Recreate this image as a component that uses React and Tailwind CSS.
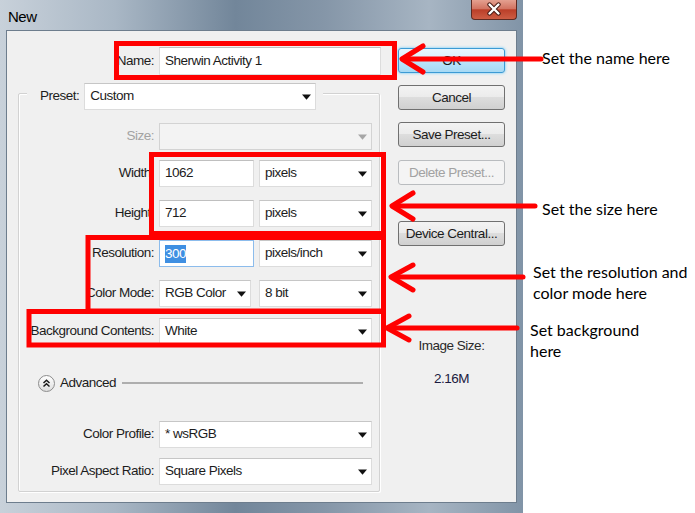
import clsx from "clsx";

const DownArrow = ({ disabled }) => (
  <svg width="9" height="6" viewBox="0 0 9 6" className="shrink-0">
    <path d="M0 0.5H9L4.5 5.8Z" fill={disabled ? "#a6a6a6" : "#111"} />
  </svg>
);

const Select = ({ value, w, disabled, className }) => (
  <div
    className={clsx(
      "flex h-[27px] items-center justify-between border pl-[5px] pr-[4px]",
      w,
      className,
      disabled ? "border-[#d3d3d3] bg-[#f3f3f3]" : "border-[#dcdcdc] border-t-[#c6c6c6] bg-white"
    )}
  >
    <span className="whitespace-nowrap">{value}</span>
    <DownArrow disabled={disabled} />
  </div>
);

const Field = ({ w, children, focus, className }) => (
  <div
    className={clsx(
      "flex h-[27px] items-center border bg-white pl-[5px]",
      w,
      className,
      focus ? "border-[#8cbcec]" : "border-[#dcdcdc] border-t-[#bfbfbf]"
    )}
  >
    {children}
  </div>
);

const Row = ({ label, dim, className, children }) => (
  <div className={clsx("flex items-center", className)}>
    <div className={clsx("w-[140px] pr-[5px] text-right whitespace-nowrap", dim && "text-[#a3a3a3]")}>{label}</div>
    <div className="flex items-center">{children}</div>
  </div>
);

const Btn = ({ children, primary, disabled, className }) => (
  <div
    className={clsx(
      "h-[25px] w-[107px] rounded-[3px] border text-center leading-[23px] whitespace-nowrap",
      className,
      primary &&
        "border-[#3c9ad4] bg-[linear-gradient(#e9f6fd,#d6effc_50%,#bde5fb_50%,#a6d9f4)] shadow-[0_0_3px_#5cc6fb]",
      disabled && "border-[#b9bcbf] bg-[#f4f4f4] text-[#a2a2a2]",
      !primary && !disabled && "border-[#707070] bg-[linear-gradient(#f3f3f3,#ebebeb_50%,#dddddd_50%,#d0d0d0)]"
    )}
  >
    {children}
  </div>
);

const CloseButton = () => (
  <div className="mr-[6px] flex h-[20px] w-[46px] items-start justify-center rounded-b-[4px] border border-t-0 border-[#5e2a22] bg-[linear-gradient(#e4a090,#d27462_45%,#bb3f29_52%,#cd5d44)]">
    <svg width="16" height="14" viewBox="0 0 16 14" className="mt-[2px]">
      <path d="M3.5 2.5L12.5 11.5M12.5 2.5L3.5 11.5" stroke="#4a1c16" strokeWidth="4.4" strokeLinecap="round" />
      <path d="M3.5 2.5L12.5 11.5M12.5 2.5L3.5 11.5" stroke="#fff" strokeWidth="2.4" strokeLinecap="round" />
    </svg>
  </div>
);

const AdvancedToggle = () => (
  <div className="flex h-[17px] w-[17px] items-center justify-center rounded-full border border-[#8c8c8c] bg-[linear-gradient(#ffffff,#dedede)]">
    <svg width="11" height="11" viewBox="0 0 11 11">
      <path d="M2.5 5L5.5 2.2L8.5 5M2.5 8.5L5.5 5.7L8.5 8.5" fill="none" stroke="#1a1a1a" strokeWidth="1.5" />
    </svg>
  </div>
);

const note = "absolute font-['Lato',sans-serif] text-[16px] leading-[21px] tracking-normal text-black";

const Annotations = () => (
  <>
    <svg className="pointer-events-none absolute left-0 top-0" width="695" height="513" viewBox="0 0 695 513">
      <g fill="none" stroke="#ff0000" strokeWidth="5">
        <rect x="116.5" y="43.5" width="278" height="34" />
        <rect x="151.5" y="154.5" width="232" height="79" />
        <rect x="88" y="237.5" width="295.5" height="73.5" />
        <rect x="29" y="311.5" width="354.5" height="33.5" />
      </g>
      <g fill="none" stroke="#ff0000" strokeWidth="5" strokeLinecap="round" strokeLinejoin="round">
        <path d="M403 59H541" />
        <path d="M423 46L402 59L423 72" />
        <path d="M393 206H535" />
        <path d="M413 193L392 206L413 219" />
        <path d="M393 277H523" />
        <path d="M413 265L391 277L413 290" />
        <path d="M389 328H517" />
        <path d="M409 316L387 328L409 340" />
      </g>
    </svg>
    <div className={clsx(note, "left-[542px] top-[47px]")}>Set the name here</div>
    <div className={clsx(note, "left-[542px] top-[198px]")}>Set the size here</div>
    <div className={clsx(note, "left-[533px] top-[261px]")}>
      Set the resolution and
      <br />
      color mode here
    </div>
    <div className={clsx(note, "left-[530px] top-[319px]")}>
      Set background
      <br />
      here
    </div>
  </>
);

export default function App() {
  return (
    <div className="relative h-[513px] w-[695px] overflow-hidden bg-white font-['Liberation_Sans',sans-serif] text-[13.5px] tracking-[-0.5px] text-[#1c1c1c]">
      {/* window */}
      <div className="flex h-[513px] w-[523px] flex-col bg-[linear-gradient(to_right,#c8d1da,#a9b7c5_22%,#72869a_45%,#8596a8_62%,#a7b5c3_82%,#8194a7)]">
        <div className="flex h-[30px] shrink-0 items-start justify-between">
          <span className="ml-[8px] mt-[6px] text-[15px] text-black">New</span>
          <CloseButton />
        </div>

        <div className="mx-[6px] flex h-[473px] shrink-0 border border-[#6d7d8d] bg-[#f0f0f0]">
          {/* left form */}
          <div className="w-[384px] pt-[16px]">
            <div className="flex items-center">
              <div className="w-[152px] pr-[5px] text-right">Name:</div>
              <Field w="w-[222px]" className="h-[28px]">Sherwin Activity 1</Field>
            </div>

            <div className="ml-[11px] mt-[18px] w-[362px] rounded-[2px] border border-[#d2d2d2] pb-[6px] shadow-[inset_1px_1px_0_#ffffff,1px_1px_0_#ffffff]">
              <div className="-mt-[11px] ml-[8px] flex w-fit items-center bg-[#f0f0f0] pl-[13px] pr-[7px]">
                <span className="mr-[5px]">Preset:</span>
                <Select value="Custom" w="w-[232px]" />
              </div>

              <Row label="Size:" dim className="mt-[13px]">
                <Select value="" w="w-[213px]" disabled />
              </Row>
              <Row label="Width:" className="mt-[10px]">
                <Field w="w-[95px]">1062</Field>
                <Select value="pixels" w="w-[113px]" className="ml-[5px]" />
              </Row>
              <Row label="Height:" className="mt-[13px]">
                <Field w="w-[95px]">712</Field>
                <Select value="pixels" w="w-[113px]" className="ml-[5px]" />
              </Row>
              <Row label="Resolution:" className="mt-[13px]">
                <Field w="w-[95px]" focus>
                  <span className="bg-[#3f8fe2] leading-[18px] text-white">300</span>
                </Field>
                <Select value="pixels/inch" w="w-[113px]" className="ml-[5px]" />
              </Row>
              <Row label="Color Mode:" className="mt-[13px]">
                <Select value="RGB Color" w="w-[92px]" />
                <Select value="8 bit" w="w-[113px]" className="ml-[8px]" />
              </Row>
              <Row label="Background Contents:" className="mt-[11px]">
                <Select value="White" w="w-[213px]" />
              </Row>

              <div className="ml-[19px] mt-[28px] flex h-[20px] items-center">
                <AdvancedToggle />
                <span className="ml-[5px]">Advanced</span>
                <div className="ml-[6px] mr-[16px] h-[2px] flex-1 bg-[#aeaeae]" />
              </div>

              <Row label="Color Profile:" className="mt-[28px]">
                <Select value="* wsRGB" w="w-[213px]" />
              </Row>
              <Row label="Pixel Aspect Ratio:" className="mt-[10px]">
                <Select value="Square Pixels" w="w-[213px]" />
              </Row>
            </div>
          </div>

          {/* right buttons */}
          <div className="ml-[7px] flex w-[107px] flex-col items-center pt-[17px]">
            <Btn primary>OK</Btn>
            <Btn className="mt-[12px]">Cancel</Btn>
            <Btn className="mt-[12px]">Save Preset...</Btn>
            <Btn disabled className="mt-[13px]">Delete Preset...</Btn>
            <Btn className="mt-[36px]">Device Central...</Btn>
            <div className="mt-[91px] leading-[17px] text-[#2a2a2a]">Image Size:</div>
            <div className="mt-[16px] leading-[17px] text-[#1a1a40]">2.16M</div>
          </div>
        </div>
      </div>

      <Annotations />
    </div>
  );
}
